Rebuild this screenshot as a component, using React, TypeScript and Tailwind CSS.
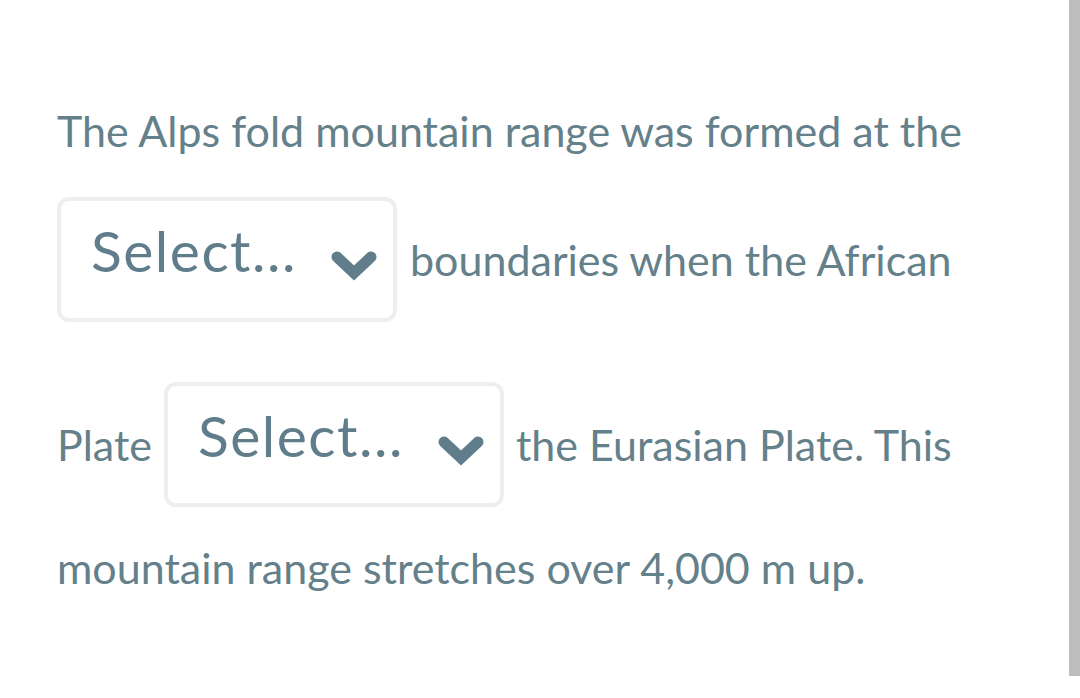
function Chevron() {
  return (
    <svg width="46" height="30" viewBox="0 0 46 30" className="shrink-0 mt-[29px]">
      <polyline
        points="6,6 23,22 40,6"
        fill="none"
        stroke="#607d8b"
        strokeWidth="11"
        strokeLinecap="round"
        strokeLinejoin="miter"
      />
    </svg>
  );
}

function Dropdown() {
  return (
    <div className="flex h-[125px] w-[340px] shrink-0 items-start rounded-xl border-4 border-[#eeeeee] bg-white pl-[30px] pr-[16px] pt-[21px]">
      <span className="text-[57px] leading-[57px] tracking-[1.5px] text-[#607d8b]">Select...</span>
      <span className="ml-auto">
        <Chevron />
      </span>
    </div>
  );
}

export default function App() {
  return (
    <div className="flex h-[698px] w-full bg-white font-['Lato',sans-serif] text-[#64808a]">
      <div className="flex-1 pl-[57px] pt-[101px] text-[43px] leading-[60px]">
        <p className="whitespace-nowrap">The Alps fold mountain range was formed at the</p>

        <div className="mt-[36px] flex items-center gap-[13px] whitespace-nowrap">
          <Dropdown />
          <span>boundaries when the African</span>
        </div>

        <div className="mt-[60px] flex items-center gap-[12px] whitespace-nowrap">
          <span>Plate</span>
          <Dropdown />
          <span>the Eurasian Plate. This</span>
        </div>

        <p className="mt-[31px] whitespace-nowrap">mountain range stretches over 4,000 m up.</p>
      </div>
      <div className="w-[11px] shrink-0">
        <div className="h-[676px] bg-[#bdbdbd]" />
      </div>
    </div>
  );
}
